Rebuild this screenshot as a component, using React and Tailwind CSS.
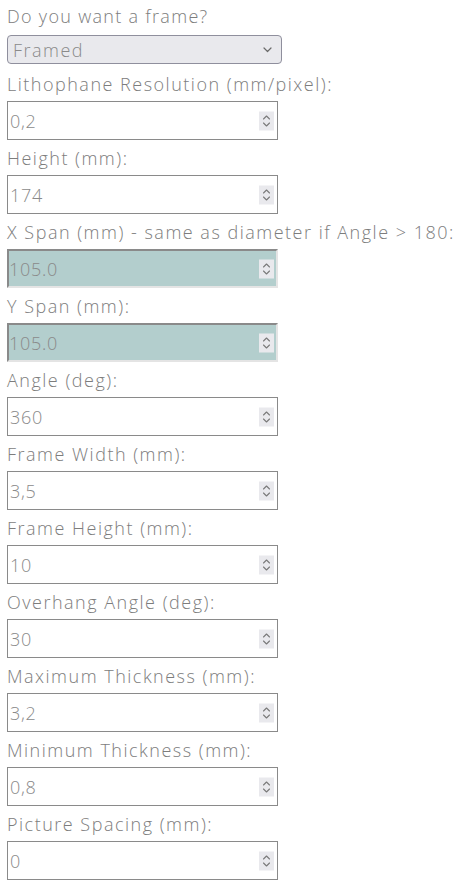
import React from "react";

function Spinner() {
  return (
    <div className="absolute right-[4px] top-1/2 -translate-y-1/2 w-[15px] h-[19px] bg-[#e9e9ed] flex items-center justify-center">
      <svg width="9" height="13" viewBox="0 0 9 13" fill="none" stroke="#7a7a7a" strokeWidth="1.1" strokeLinecap="round" strokeLinejoin="round">
        <path d="M1.5 4.5 L4.5 1.5 L7.5 4.5" />
        <path d="M1.5 8.5 L4.5 11.5 L7.5 8.5" />
      </svg>
    </div>
  );
}

function NumField({ label, value, disabled }) {
  return (
    <div>
      <div className="pt-[5px] pb-[3px] leading-[27px] whitespace-nowrap tracking-[1.5px]">{label}</div>
      <div className="relative w-[271px] h-[39px]">
        {disabled ? (
          <div className="w-full h-full border-2 border-t-[#8a8a8a] border-l-[#8a8a8a] border-b-[#e4e4e4] border-r-[#e4e4e4] bg-[#b3cecd] text-[#8a8a8a] flex items-center pl-[0px] leading-none tracking-[0.7px]">
            {value}
          </div>
        ) : (
          <div className="w-full h-full border border-[#8a8a8a] bg-white text-[#8a8a8a] flex items-center pl-[2px] leading-none tracking-[0.7px]">
            {value}
          </div>
        )}
        <Spinner />
      </div>
    </div>
  );
}

export default function App() {
  const fields = [
    ["Lithophane Resolution (mm/pixel):", "0,2"],
    ["Height (mm):", "174"],
    ["X Span (mm) - same as diameter if Angle > 180:", "105.0", true],
    ["Y Span (mm):", "105.0", true],
    ["Angle (deg):", "360"],
    ["Frame Width (mm):", "3,5"],
    ["Frame Height (mm):", "10"],
    ["Overhang Angle (deg):", "30"],
    ["Maximum Thickness (mm):", "3,2"],
    ["Minimum Thickness (mm):", "0,8"],
    ["Picture Spacing (mm):", "0"],
  ];
  return (
    <div className="w-[463px] h-[895px] bg-white px-[7px] font-['Open_Sans',sans-serif] font-light text-[18px] text-[#7d7d7d]">
      <div className="pt-[3px] pb-[5px] leading-[27px] tracking-[1.3px]">Do you want a frame?</div>
      <div className="relative w-[275px] h-[29px] rounded-[4px] border border-[#8f8f9d] bg-[#e9e9ed] flex items-center pl-[5px] text-[#8a8a8a] leading-none tracking-[1.5px]">
        Framed
        <svg className="absolute right-[9px] top-1/2 -translate-y-1/2" width="9" height="6" viewBox="0 0 9 6" fill="none" stroke="#6a6a6a" strokeWidth="1.2" strokeLinecap="round" strokeLinejoin="round">
          <path d="M1 1 L4.5 4.5 L8 1" />
        </svg>
      </div>
      <div className="h-[2px]" />
      {fields.map(([l, v, d]) => (
        <NumField key={l} label={l} value={v} disabled={d} />
      ))}
    </div>
  );
}
